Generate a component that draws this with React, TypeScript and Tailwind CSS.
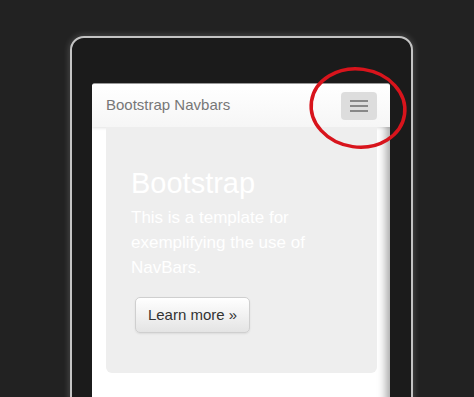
export default function App() {
  return (
    <div
      className="relative h-[397px] w-[474px] overflow-hidden bg-[#222222]"
      style={{ fontFamily: '"Liberation Sans", Arial, sans-serif' }}
    >
      {/* phone frame */}
      <div className="ml-[70px] mt-[36px] h-[420px] w-[343px] rounded-t-[14px] border-2 border-[#c4c4c4] bg-[#1b1b1b] pl-[20px] pt-[45px] shadow-[0_0_6px_1px_rgba(255,255,255,0.18)]">
        {/* screen */}
        <div className="h-[330px] w-[298px] overflow-hidden rounded-t-[3px] border-t border-[#999] bg-white shadow-[inset_-10px_0_9px_-6px_rgba(0,0,0,0.35)]">
          <nav className="flex h-[43px] items-center justify-between bg-gradient-to-b from-white to-[#f6f6f6] pl-[14px] pr-[13px] shadow-[0_1px_3px_rgba(0,0,0,0.12)]">
            <span className="text-[15px] text-[#777]">Bootstrap Navbars</span>
            <button className="flex h-[28px] w-[36px] flex-col items-center justify-center gap-[3px] rounded-[4px] bg-[#dddddd]">
              <span className="block h-[2px] w-[18px] bg-[#888]" />
              <span className="block h-[2px] w-[18px] bg-[#888]" />
              <span className="block h-[2px] w-[18px] bg-[#888]" />
            </button>
          </nav>
          <div className="ml-[14px] h-[246px] w-[271px] rounded-b-[6px] bg-[#eeeeee] pl-[25px] pt-[40px]">
            <h1 className="text-[29px] leading-[32px] text-white">Bootstrap</h1>
            <p className="mt-[6px] w-[222px] text-[17px] leading-[25px] text-white">
              This is a template for exemplifying the use of NavBars.
            </p>
            <button className="ml-[4px] mt-[17px] h-[36px] w-[115px] rounded-[5px] border border-[#cfcfcf] bg-gradient-to-b from-white to-[#e4e4e4] text-[15px] text-[#333] shadow-[0_1px_2px_rgba(0,0,0,0.08)]">
              Learn more »
            </button>
          </div>
        </div>
      </div>

      {/* red annotation circle */}
      <svg
        className="absolute left-[306px] top-[64px]"
        width="106"
        height="88"
        viewBox="0 0 106 88"
      >
        <ellipse
          cx="52"
          cy="44"
          rx="47"
          ry="39"
          transform="rotate(8 52 44)"
          fill="none"
          stroke="#d8141c"
          strokeWidth="3.5"
        />
      </svg>
    </div>
  );
}
